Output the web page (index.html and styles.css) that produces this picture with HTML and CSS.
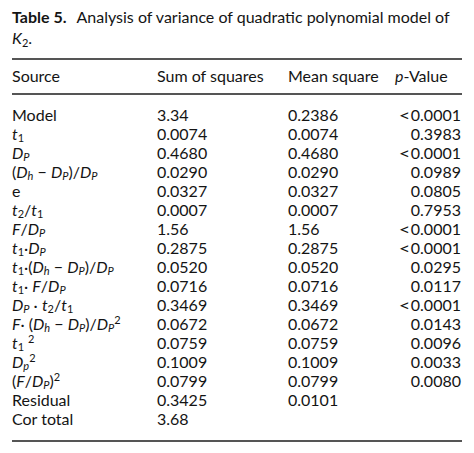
FILE: index.html
```html
<!DOCTYPE html>
<html>
<head>
<meta charset="utf-8">
<link rel="stylesheet" href="styles.css">
</head>
<body>
<div class="page">
  <p class="caption"><b>Table 5.</b>Analysis of variance of quadratic polynomial model of <i>K</i><sub class="cs">2</sub>.</p>
  <table class="anova">
    <colgroup>
      <col class="c-src"><col class="c-ss"><col class="c-ms"><col class="c-p">
    </colgroup>
    <thead>
      <tr><th>Source</th><th>Sum of squares</th><th>Mean square</th><th><i>p</i>-Value</th></tr>
    </thead>
    <tbody>
      <tr class="first"><td>Model</td><td>3.34</td><td>0.2386</td><td class="pv"><span class="lt">&lt;</span>0.0001</td></tr>
      <tr><td><i>t</i><sub>1</sub></td><td>0.0074</td><td>0.0074</td><td class="pv">0.3983</td></tr>
      <tr><td><i>D</i><sub><i>P</i></sub></td><td>0.4680</td><td>0.4680</td><td class="pv"><span class="lt">&lt;</span>0.0001</td></tr>
      <tr><td>(<i>D</i><sub><i>h</i></sub> − <i>D</i><sub><i>P</i></sub>)/<i>D</i><sub><i>P</i></sub></td><td>0.0290</td><td>0.0290</td><td class="pv">0.0989</td></tr>
      <tr><td>e</td><td>0.0327</td><td>0.0327</td><td class="pv">0.0805</td></tr>
      <tr><td><i>t</i><sub>2</sub>/<i>t</i><sub>1</sub></td><td>0.0007</td><td>0.0007</td><td class="pv">0.7953</td></tr>
      <tr><td><i>F</i>/<i>D</i><sub><i>P</i></sub></td><td>1.56</td><td>1.56</td><td class="pv"><span class="lt">&lt;</span>0.0001</td></tr>
      <tr><td><i>t</i><sub>1</sub>·<i>D</i><sub><i>P</i></sub></td><td>0.2875</td><td>0.2875</td><td class="pv"><span class="lt">&lt;</span>0.0001</td></tr>
      <tr><td><i>t</i><sub>1</sub>·(<i>D</i><sub><i>h</i></sub> − <i>D</i><sub><i>P</i></sub>)/<i>D</i><sub><i>P</i></sub></td><td>0.0520</td><td>0.0520</td><td class="pv">0.0295</td></tr>
      <tr><td><i>t</i><sub>1</sub>· <i>F</i>/<i>D</i><sub><i>P</i></sub></td><td>0.0716</td><td>0.0716</td><td class="pv">0.0117</td></tr>
      <tr><td><i>D</i><sub><i>P</i></sub> · <i>t</i><sub>2</sub>/<i>t</i><sub>1</sub></td><td>0.3469</td><td>0.3469</td><td class="pv"><span class="lt">&lt;</span>0.0001</td></tr>
      <tr><td><i>F</i>· (<i>D</i><sub><i>h</i></sub> − <i>D</i><sub><i>P</i></sub>)/<i>D</i><sub><i>P</i></sub><sup>2</sup></td><td>0.0672</td><td>0.0672</td><td class="pv">0.0143</td></tr>
      <tr><td><i>t</i><sub>1</sub><sup class="gap">2</sup></td><td>0.0759</td><td>0.0759</td><td class="pv">0.0096</td></tr>
      <tr><td><i>D</i><sub><i>p</i></sub><sup>2</sup></td><td>0.1009</td><td>0.1009</td><td class="pv">0.0033</td></tr>
      <tr><td>(<i>F</i>/<i>D</i><sub><i>P</i></sub>)<sup>2</sup></td><td>0.0799</td><td>0.0799</td><td class="pv">0.0080</td></tr>
      <tr><td>Residual</td><td>0.3425</td><td>0.0101</td><td class="pv"></td></tr>
      <tr class="last"><td>Cor total</td><td>3.68</td><td></td><td class="pv"></td></tr>
    </tbody>
  </table>
</div>
</body>
</html>
```

FILE: styles.css
```css
body {
  margin: 0;
  background: #ffffff;
  color: #141414;
  font-family: Lato, "Open Sans", "DejaVu Sans", sans-serif;
}

.page {
  padding: 6px 12px 0 12px;
  width: 450px;
}

.caption {
  margin: 0;
  font-size: 16px;
  line-height: 21px;
}

.caption b {
  font-weight: 700;
  margin-right: 10px;
}

.cs {
  font-size: 11px;
  line-height: 0;
  vertical-align: -3px;
}

.anova {
  width: 450px;
  table-layout: fixed;
  margin-top: 10px;
  border-collapse: collapse;
  font-size: 16px;
  line-height: 19px;
}

.c-src { width: 145px; }
.c-ss { width: 131px; }
.c-ms { width: 107px; }
.c-p { width: 67px; }

.anova th {
  font-weight: normal;
  text-align: left;
  white-space: nowrap;
  padding: 6px 0 8px 0;
  border-top: 2px solid #555555;
  border-bottom: 2px solid #555555;
}

.anova td {
  padding: 0;
  white-space: nowrap;
  text-align: left;
}

.anova td.pv {
  text-align: right;
  padding-right: 1px;
}

.lt {
  display: inline-block;
  transform: scaleX(1.25);
  margin-right: 2px;
}

.anova tr.first td {
  padding-top: 10px;
}

.anova tr.last td {
  padding-bottom: 12px;
  border-bottom: 2px solid #555555;
}

.anova sub,
.anova sup {
  font-size: 11px;
  line-height: 0;
}

.anova sub {
  vertical-align: -2px;
}

.anova sup {
  vertical-align: 6px;
}

.anova sup.gap {
  margin-left: 4px;
}
```
